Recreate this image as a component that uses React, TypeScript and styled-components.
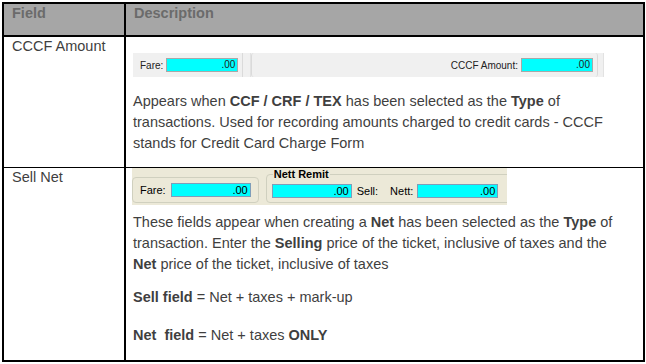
import styled, { createGlobalStyle } from 'styled-components';

const GlobalStyle = createGlobalStyle`
  body {
    margin: 0;
    background: #fff;
    font-family: 'Liberation Sans', Arial, sans-serif;
  }
`;

const Page = styled.div`
  padding: 2px 1px 0 2px;
`;

const Table = styled.div`
  display: grid;
  grid-template-columns: 120px 1fr;
  width: 643px;
  box-sizing: border-box;
  border: 2px solid #000;
  color: #3f3f3f;
  font-size: 14.5px;
`;

const HeadCell = styled.div<{ $divider?: boolean }>`
  height: 33px;
  padding: 0 8px;
  box-sizing: border-box;
  background: #a6a6a6;
  color: #6b6b6b;
  font-weight: bold;
  line-height: 19px;
  border-bottom: 2px solid #000;
  border-left: ${p => (p.$divider ? '2px solid #000' : 'none')};
`;

const FieldCell = styled.div<{ $last?: boolean }>`
  padding: 0 8px;
  line-height: 18px;
  border-bottom: ${p => (p.$last ? 'none' : '1px solid #000')};
`;

const DescCell = styled.div<{ $last?: boolean; $top: number; $bottom: number }>`
  padding: ${p => p.$top}px 25px ${p => p.$bottom}px 7px;
  border-left: 2px solid #000;
  border-bottom: ${p => (p.$last ? 'none' : '1px solid #000')};
`;

const Para = styled.p<{ $gap: number }>`
  margin: ${p => p.$gap}px 0 0;
  line-height: 21px;
  b {
    font-weight: bold;
  }
`;

/* windows 7 style strip */
const Win7Strip = styled.div`
  display: flex;
  align-items: stretch;
  width: 471px;
  height: 24px;
  background: #f0f0f0;
  font-size: 10px;
  color: #222;
`;

const Win7Pane = styled.div<{ $grow?: boolean }>`
  display: flex;
  align-items: center;
  gap: 3px;
  flex: ${p => (p.$grow ? 1 : 'none')};
  justify-content: ${p => (p.$grow ? 'flex-end' : 'flex-start')};
  padding: 0 4px 0 ${p => (p.$grow ? '0' : '7px')};
  border-left: ${p => (p.$grow ? '1px solid #dadada' : 'none')};
  border-right: 1px solid #dadada;
  border-radius: ${p => (p.$grow ? '3px' : '0')};
`;

const Win7Gap = styled.div<{ $w: number }>`
  width: ${p => p.$w}px;
  border-right: 1px solid #e2e2e2;
`;

const Win7Input = styled.div<{ $w: number }>`
  width: ${p => p.$w}px;
  height: 14px;
  box-sizing: border-box;
  background: #00ffff;
  border: 1px solid #a8a8a8;
  text-align: right;
  padding-right: 2px;
  line-height: 12px;
  font-size: 10px;
`;

/* windows xp style strip */
const XpStrip = styled.div`
  display: flex;
  align-items: stretch;
  gap: 7px;
  width: 375px;
  height: 37px;
  box-sizing: border-box;
  padding-bottom: 2px;
  margin-left: -1px;
  overflow: hidden;
  background: #ece9d8;
  font-family: 'Liberation Sans', Tahoma, sans-serif;
  font-size: 11px;
  color: #000;
`;

const GroupBox = styled.fieldset<{ $open?: boolean }>`
  display: flex;
  align-items: center;
  margin: ${p => (p.$open ? '0' : '9px 0 0')};
  padding: ${p => (p.$open ? '0 0 2px 5px' : '0 7px 0 7px')};
  border: 1px solid #d0d0bf;
  border-radius: 4px;
  flex: ${p => (p.$open ? '0 0 300px' : 'none')};
  min-width: 0;
`;

const Legend = styled.legend`
  font-weight: bold;
  font-size: 11px;
  color: #000;
  padding: 0 1px;
  margin-left: 1px;
  line-height: 13px;
`;

const XpLabel = styled.span<{ $gap: number }>`
  margin-right: ${p => p.$gap}px;
`;

const XpInput = styled.div<{ $w: number; $after?: number }>`
  width: ${p => p.$w}px;
  height: 14px;
  box-sizing: border-box;
  background: #00ffff;
  border: 1px solid #7f9db9;
  text-align: right;
  padding-right: 2px;
  line-height: 12px;
  margin-right: ${p => p.$after ?? 0}px;
`;

export default function App() {
  return (
    <Page>
      <GlobalStyle />
      <Table>
        <HeadCell>Field</HeadCell>
        <HeadCell $divider>Description</HeadCell>

        <FieldCell>CCCF Amount</FieldCell>
        <DescCell $top={16} $bottom={13}>
          <Win7Strip>
            <Win7Pane>
              <span>Fare:</span>
              <Win7Input $w={72}>.00</Win7Input>
            </Win7Pane>
            <Win7Gap $w={7} />
            <Win7Pane $grow>
              <span>CCCF Amount:</span>
              <Win7Input $w={72}>.00</Win7Input>
            </Win7Pane>
            <Win7Gap $w={5} />
          </Win7Strip>
          <Para $gap={14}>
            Appears when <b>CCF / CRF / TEX</b> has been selected as the <b>Type</b> of
            transactions. Used for recording amounts charged to credit cards - CCCF
            stands for Credit Card Charge Form
          </Para>
        </DescCell>

        <FieldCell $last>Sell Net</FieldCell>
        <DescCell $last $top={0} $bottom={14}>
          <XpStrip>
            <GroupBox>
              <XpLabel $gap={5}>Fare:</XpLabel>
              <XpInput $w={80}>.00</XpInput>
            </GroupBox>
            <GroupBox $open>
              <Legend>Nett Remit</Legend>
              <XpInput $w={80} $after={5}>.00</XpInput>
              <XpLabel $gap={12}>Sell:</XpLabel>
              <XpLabel $gap={4}>Nett:</XpLabel>
              <XpInput $w={81}>.00</XpInput>
            </GroupBox>
          </XpStrip>
          <Para $gap={7}>
            These fields appear when creating a <b>Net</b> has been selected as the <b>Type</b> of
            transaction. Enter the <b>Selling</b> price of the ticket, inclusive of taxes and the{' '}
            <b>Net</b> price of the ticket, inclusive of taxes
          </Para>
          <Para $gap={12}>
            <b>Sell field</b> = Net + taxes + mark-up
          </Para>
          <Para $gap={17}>
            <b>Net&nbsp; field</b> = Net + taxes <b>ONLY</b>
          </Para>
        </DescCell>
      </Table>
    </Page>
  );
}
